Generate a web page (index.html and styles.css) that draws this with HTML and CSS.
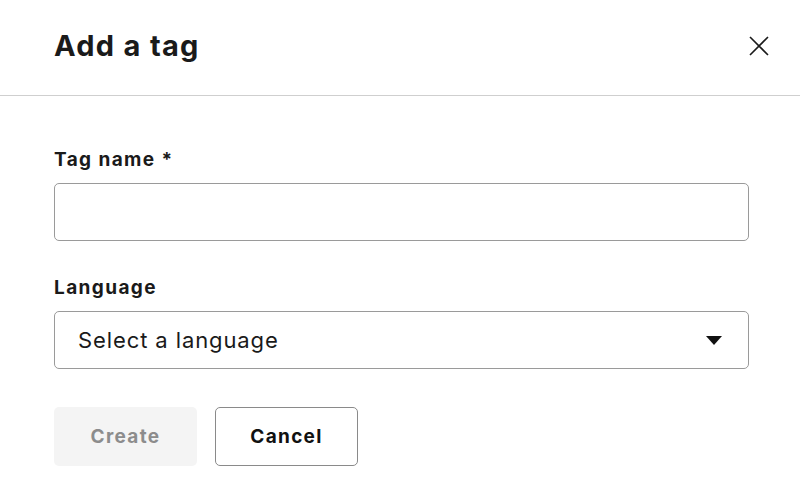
FILE: index.html
```html
<!DOCTYPE html>
<html lang="en">
<head>
  <meta charset="UTF-8">
  <meta name="viewport" content="width=device-width, initial-scale=1.0">
  <title>Add a tag</title>
  <link rel="stylesheet" href="styles.css">
</head>
<body>
  <div class="modal">
    <header class="modal-header">
      <h1>Add a tag</h1>
      <button class="close-btn" aria-label="Close">
        <svg width="20" height="20" viewBox="0 0 20 20">
          <path d="M1 1 L19 19 M19 1 L1 19" stroke="#1a1a1a" stroke-width="1.6" fill="none"/>
        </svg>
      </button>
    </header>

    <div class="modal-body">
      <div class="form-group">
        <label for="tag-name">Tag name *</label>
        <input type="text" id="tag-name">
      </div>

      <div class="form-group">
        <label for="language">Language</label>
        <div class="select-wrap">
          <select id="language">
            <option>Select a language</option>
          </select>
          <svg class="caret" width="16" height="9" viewBox="0 0 16 9">
            <path d="M0 0 H16 L8 9 Z" fill="#111"/>
          </svg>
        </div>
      </div>

      <div class="actions">
        <button class="create-btn" disabled>Create</button>
        <button class="cancel-btn">Cancel</button>
      </div>
    </div>
  </div>
</body>
</html>
```

FILE: styles.css
```css
body {
  font-family: Inter, "Noto Sans", sans-serif;
  margin: 0;
  padding: 0;
  background-color: white;
  color: #1a1a1a;
}

.modal-header {
  height: 95px;
  border-bottom: 1px solid #cfcfcf;
  padding: 0 31px 0 54px;
  display: flex;
  justify-content: space-between;
  align-items: center;
}

.modal-header h1 {
  margin: 0 0 4px 0;
  font-size: 29px;
  font-weight: 700;
  letter-spacing: 1.3px;
}

.close-btn {
  background: none;
  border: none;
  padding: 0;
  margin-bottom: 4px;
  cursor: pointer;
  display: flex;
}

.modal-body {
  padding: 52px 51px 0 54px;
}

.form-group {
  margin-bottom: 35px;
}

.form-group label {
  display: block;
  font-size: 19px;
  line-height: 24px;
  font-weight: 700;
  letter-spacing: 1.4px;
  margin-bottom: 11px;
}

.form-group input,
.form-group select {
  display: block;
  width: 100%;
  height: 58px;
  box-sizing: border-box;
  border: 1.5px solid #9a9a9a;
  border-radius: 5px;
  background: white;
  font-family: inherit;
  font-size: 22px;
  letter-spacing: 0.9px;
  color: #1a1a1a;
  padding: 0 23px;
}

.form-group select {
  appearance: none;
  -webkit-appearance: none;
}

.select-wrap {
  position: relative;
}

.caret {
  position: absolute;
  right: 27px;
  top: 25px;
  pointer-events: none;
}

.actions {
  display: flex;
  gap: 18px;
  padding-top: 3px;
}

.actions button {
  width: 143px;
  height: 59px;
  border-radius: 5px;
  font-family: inherit;
  font-size: 19px;
  font-weight: 700;
  letter-spacing: 1.3px;
  cursor: pointer;
}

.create-btn {
  background-color: #f4f4f4;
  color: #8c8c8c;
  border: none;
}

.cancel-btn {
  background-color: white;
  color: #111;
  border: 1.5px solid #8a8a8a;
}
```
